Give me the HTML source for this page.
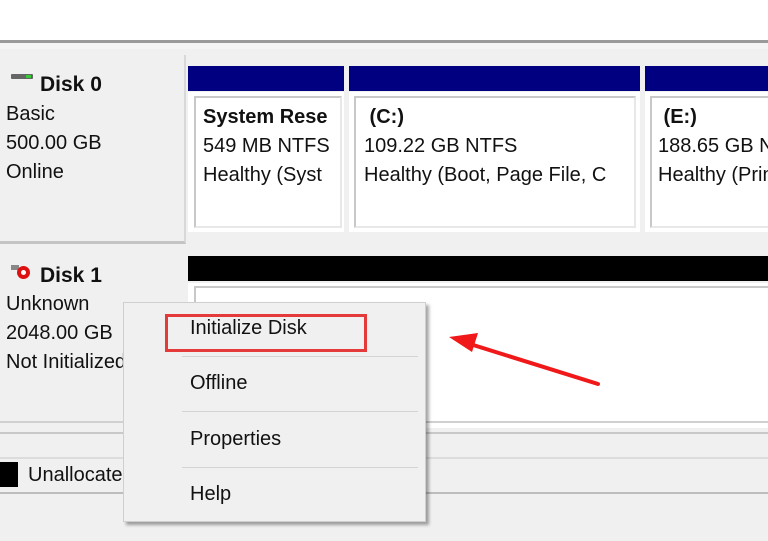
<!DOCTYPE html>
<html><head><style>
body{margin:0;width:768px;height:541px;overflow:hidden;background:#f0f0f0;font-family:"Liberation Sans",sans-serif;color:#111;position:relative}
.a{position:absolute}
.t{position:absolute;font-size:20px;line-height:29px;white-space:nowrap;overflow:hidden}
.b{font-weight:bold}
.blue{background:#000080;height:25px;top:66px}
.wh{background:#fff;top:92px;height:140px}
.in{border:2px solid #c8c8c8;border-right-color:#e8e8e8;border-bottom-color:#e8e8e8;background:#fff}
.sep{position:absolute;left:182px;width:236px;height:1px;background:#d4d4d4}
</style></head><body>
<div class="a" style="left:0;top:0;width:768px;height:40px;background:#fff"></div>
<div class="a" style="left:0;top:40px;width:768px;height:3px;background:#9a9a9a"></div>
<div class="a" style="left:0;top:43px;width:768px;height:6px;background:#f4f4f4"></div>
<!-- disk0 label -->
<div class="a" style="left:0;top:55px;width:184px;height:186px;border-right:2px solid #d8d8d8;border-bottom:3px solid #c4c4c4;background:#f0f0f0"></div>
<div class="a" style="left:11px;top:74px;width:22px;height:5px;background:#666;border-radius:1px"></div>
<div class="a" style="left:26px;top:75px;width:5px;height:3px;background:#3c3"></div>
<div class="t b" style="left:40px;top:70px;font-size:21px">Disk 0</div>
<div class="t" style="left:6px;top:100px">Basic<br>500.00 GB<br>Online</div>
<!-- disk0 partitions -->
<div class="a" style="left:187px;top:60px;width:581px;height:180px;background:#f0f0f0"></div>
<div class="a blue" style="left:188px;width:156px"></div>
<div class="a blue" style="left:349px;width:291px"></div>
<div class="a blue" style="left:645px;width:123px"></div>
<div class="a wh" style="left:188px;width:156px"></div>
<div class="a wh" style="left:349px;width:291px"></div>
<div class="a wh" style="left:645px;width:123px"></div>
<div class="a in" style="left:194px;top:96px;width:144px;height:128px"></div>
<div class="a in" style="left:354px;top:96px;width:278px;height:128px"></div>
<div class="a in" style="left:650px;top:96px;width:118px;height:128px"></div>
<div class="t" style="left:203px;top:103px;width:131px"><b>System Rese</b><br>549 MB NTFS<br>Healthy (Syst</div>
<div class="t" style="left:364px;top:103px;width:264px"><b>&nbsp;(C:)</b><br>109.22 GB NTFS<br>Healthy (Boot, Page File, C</div>
<div class="t" style="left:658px;top:103px;width:110px"><b>&nbsp;(E:)</b><br>188.65 GB NTFS<br>Healthy (Primary</div>
<!-- disk1 -->
<div class="a" style="left:11px;top:265px;width:8px;height:5px;background:#888"></div>
<div class="a" style="left:17px;top:266px;width:13px;height:13px;border-radius:50%;background:#d11"></div>
<div class="a" style="left:21px;top:270px;width:5px;height:5px;border-radius:50%;background:#fff"></div>
<div class="t b" style="left:40px;top:261px;font-size:21px">Disk 1</div>
<div class="t" style="left:6px;top:290px;width:117px">Unknown<br>2048.00 GB<br>Not Initialized</div>
<div class="a" style="left:188px;top:256px;width:580px;height:25px;background:#000"></div>
<div class="a" style="left:188px;top:283px;width:580px;height:137px;background:#fff"></div>
<div class="a in" style="left:194px;top:286px;width:580px;height:140px;border-right:none;border-bottom:none"></div>
<div class="a" style="left:0;top:421px;width:768px;height:2px;background:#d0d0d0"></div>
<div class="a" style="left:0;top:432px;width:768px;height:2px;background:#c8c8c8"></div>
<div class="a" style="left:0;top:457px;width:768px;height:2px;background:#dcdcdc"></div>
<div class="a" style="left:0;top:462px;width:18px;height:25px;background:#000"></div>
<div class="t" style="left:28px;top:461px">Unallocated</div>
<div class="a" style="left:0;top:492px;width:768px;height:2px;background:#bdbdbd"></div>
<!-- menu -->
<div class="a" style="left:123px;top:302px;width:301px;height:218px;background:#f0f0f0;border:1px solid #cfcfcf;box-shadow:3px 3px 3px rgba(0,0,0,.35)"></div>
<div class="t" style="left:190px;top:314px">Initialize Disk</div>
<div class="t" style="left:190px;top:369px">Offline</div>
<div class="t" style="left:190px;top:425px">Properties</div>
<div class="t" style="left:190px;top:480px">Help</div>
<div class="sep" style="top:356px"></div>
<div class="sep" style="top:411px"></div>
<div class="sep" style="top:467px"></div>
<div class="a" style="left:165px;top:314px;width:196px;height:32px;border:3px solid #e53a3a"></div>
<svg class="a" style="left:0;top:0" width="768" height="541"><line x1="598" y1="384" x2="470" y2="344" stroke="#f01818" stroke-width="4" stroke-linecap="round"/><polygon points="449,337 478,333 472,352" fill="#f01818"/></svg>
</body></html>
